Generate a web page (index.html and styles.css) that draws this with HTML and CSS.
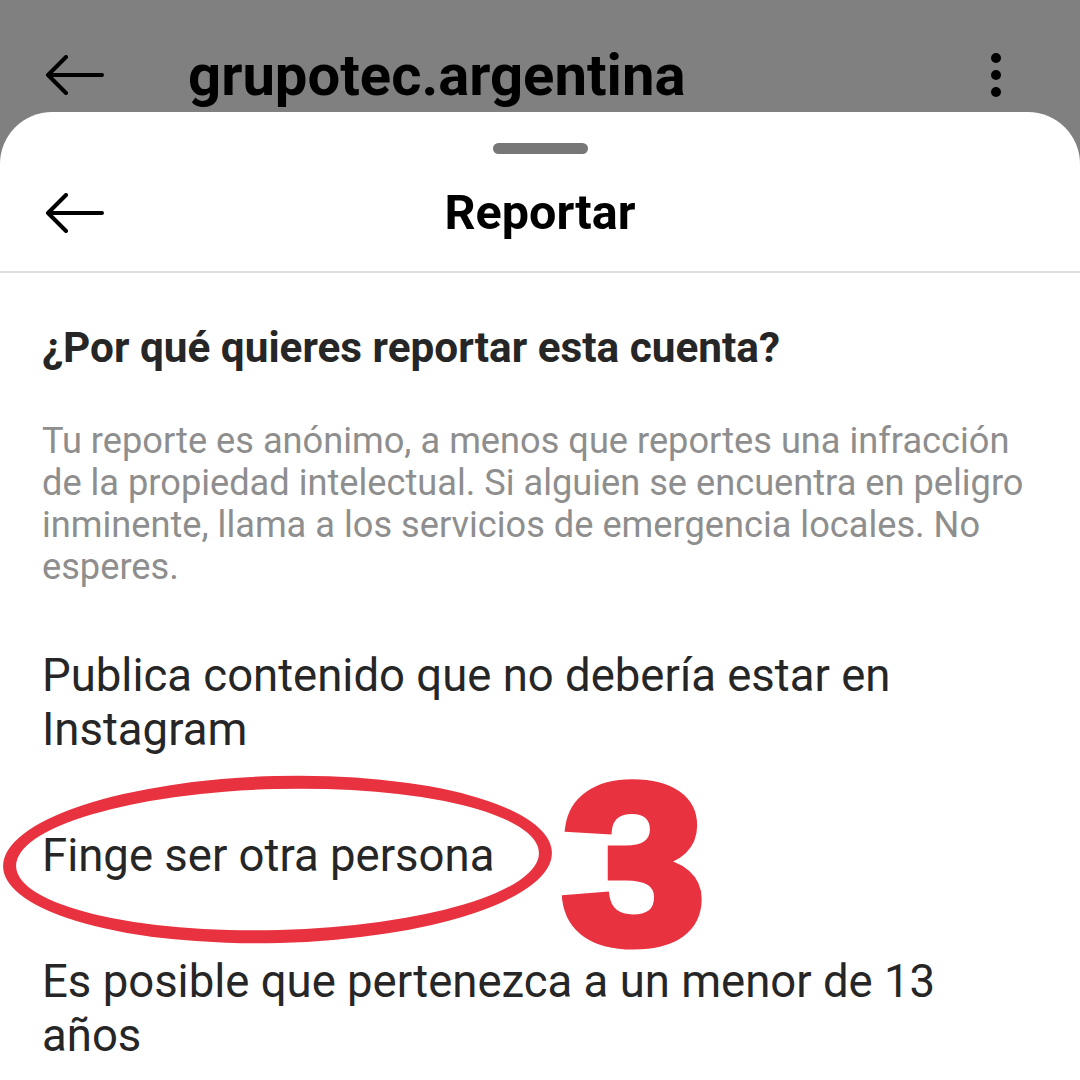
FILE: index.html
```html
<!DOCTYPE html>
<html lang="es">
<head>
<meta charset="utf-8">
<link rel="stylesheet" href="styles.css">
</head>
<body>
<div class="topbar">
  <svg class="arrow" viewBox="0 0 60 40" width="60" height="40"><path d="M58 20H4M22 2L4 20l18 18" fill="none" stroke="#000" stroke-width="4" stroke-linecap="round" stroke-linejoin="round"/></svg>
  <div class="username">grupotec.argentina</div>
  <svg class="kebab" viewBox="0 0 12 46" width="12" height="46"><circle cx="6" cy="6" r="5"/><circle cx="6" cy="23" r="5"/><circle cx="6" cy="40" r="5"/></svg>
</div>
<div class="sheet">
  <div class="handle"></div>
  <div class="header">
    <svg class="arrow" viewBox="0 0 60 40" width="60" height="40"><path d="M58 20H4M22 2L4 20l18 18" fill="none" stroke="#000" stroke-width="4" stroke-linecap="round" stroke-linejoin="round"/></svg>
    <div class="title">Reportar</div>
  </div>
  <div class="content">
    <h2 class="question">¿Por qué quieres reportar esta cuenta?</h2>
    <p class="note">Tu reporte es anónimo, a menos que reportes una infracción de la propiedad intelectual. Si alguien se encuentra en peligro inminente, llama a los servicios de emergencia locales. No esperes.</p>
    <div class="option first">Publica contenido que no debería estar en Instagram</div>
    <div class="option marked">Finge ser otra persona
      <span class="ring"></span>
      <span class="step">3</span>
    </div>
    <div class="option">Es posible que pertenezca a un menor de 13 años</div>
  </div>
</div>
</body>
</html>
```
FILE: styles.css
```css
html, body {
  margin: 0;
  padding: 0;
}
body {
  width: 1080px;
  height: 1080px;
  overflow: hidden;
  background: #808080;
  font-family: Roboto, "Noto Sans", sans-serif;
  color: #262626;
}
.topbar {
  height: 112px;
  display: flex;
  align-items: center;
  padding: 38px 0 0 44px;
  box-sizing: border-box;
  position: relative;
}
.username {
  margin-left: 84px;
  font-size: 58px;
  line-height: 58px;
  font-weight: 700;
  color: #000;
}
.kebab {
  position: absolute;
  left: 990px;
  top: 52px;
}
.sheet {
  background: #fff;
  border-radius: 52px 52px 0 0;
  height: 968px;
  overflow: hidden;
}
.handle {
  width: 95px;
  height: 11px;
  border-radius: 6px;
  background: #777;
  margin: 31px auto 0;
}
.header {
  height: 117px;
  border-bottom: 2px solid #dedede;
  display: flex;
  align-items: center;
  position: relative;
  padding-left: 44px;
}
.title {
  position: absolute;
  left: 0;
  right: 0;
  text-align: center;
  font-size: 48.5px;
  line-height: 56px;
  font-weight: 700;
  color: #000;
  pointer-events: none;
}
.content {
  padding: 0 42px;
}
.question {
  margin: 51px 0 0;
  font-size: 42.3px;
  font-weight: 700;
  line-height: 48px;
  color: #262626;
}
.note {
  margin: 48px 0 0;
  font-size: 36.2px;
  line-height: 42px;
  color: #8e8e8e;
}
.option {
  font-size: 45.5px;
  line-height: 54px;
  color: #262626;
  position: relative;
  margin-top: 72px;
}
.option.first {
  margin-top: 61px;
}
.ring {
  position: absolute;
  left: -39px;
  top: -53px;
  width: 549px;
  height: 167px;
  box-sizing: border-box;
  border: 13px solid #e8323f;
  border-radius: 50%;
  transform: rotate(-1.5deg);
}
.step {
  position: absolute;
  left: 520px;
  top: -50px;
  font-family: "Liberation Sans", Arial, sans-serif;
  font-weight: 700;
  font-size: 226px;
  line-height: 170px;
  color: #e8323f;
  -webkit-text-stroke: 10px #e8323f;
  transform: scaleX(1.14);
  transform-origin: left top;
}
```
